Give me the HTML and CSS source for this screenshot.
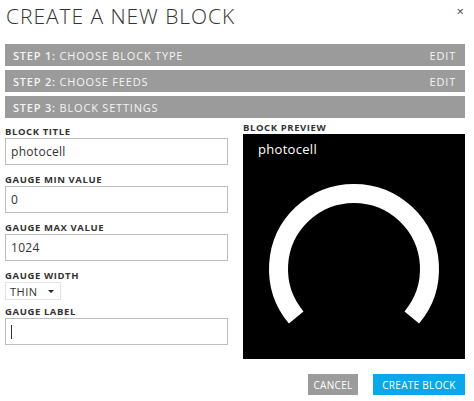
FILE: index.html
```html
<!DOCTYPE html>
<html>
<head>
<meta charset="utf-8">
<link rel="stylesheet" href="styles.css">
</head>
<body>
<div class="modal">
  <div class="header">
    <h1 class="title">CREATE A NEW BLOCK</h1>
    <span class="close">×</span>
  </div>
  <div class="step"><span><b>STEP 1:</b> CHOOSE BLOCK TYPE</span><span>EDIT</span></div>
  <div class="step"><span><b>STEP 2:</b> CHOOSE FEEDS</span><span>EDIT</span></div>
  <div class="step"><span><b>STEP 3:</b> BLOCK SETTINGS</span></div>
  <div class="content">
    <div class="form">
      <div class="field">
        <div class="label">BLOCK TITLE</div>
        <div class="input">photocell</div>
      </div>
      <div class="field">
        <div class="label">GAUGE MIN VALUE</div>
        <div class="input">0</div>
      </div>
      <div class="field">
        <div class="label">GAUGE MAX VALUE</div>
        <div class="input">1024</div>
      </div>
      <div class="field small">
        <div class="label">GAUGE WIDTH</div>
        <div class="select"><span>THIN</span><span class="caret"></span></div>
      </div>
      <div class="field">
        <div class="label">GAUGE LABEL</div>
        <div class="input"><span class="cursor"></span></div>
      </div>
    </div>
    <div class="preview">
      <div class="label plabel">BLOCK PREVIEW</div>
      <div class="pbox">
        <div class="ptitle">photocell</div>
        <svg class="gauge" width="222" height="225" viewBox="0 0 222 225">
          <path d="M 53.2 183.5 A 75.5 75.5 0 1 1 168.8 183.5" fill="none" stroke="#fff" stroke-width="19"/>
        </svg>
      </div>
    </div>
  </div>
  <div class="actions">
    <div class="btn cancel">CANCEL</div>
    <div class="btn create">CREATE BLOCK</div>
  </div>
</div>
</body>
</html>
```
FILE: styles.css
```css
html, body {
  margin: 0;
  padding: 0;
  background: #fff;
}
body {
  font-family: "Open Sans", "Liberation Sans", sans-serif;
  color: #333;
}
.modal {
  position: relative;
  width: 474px;
  height: 401px;
  padding: 0 9px 0 5px;
  box-sizing: border-box;
}
.header {
  height: 44px;
}
.title {
  margin: 0;
  padding: 3px 0 0 1px;
  font-size: 21px;
  font-weight: 300;
  line-height: 26px;
  letter-spacing: 0.95px;
  color: #333;
}
.close {
  position: absolute;
  top: 2px;
  right: 10px;
  font-size: 13px;
  color: #444;
}
.step {
  height: 22px;
  margin-bottom: 4px;
  background: #9b9b9b;
  color: #f4f4f4;
  display: flex;
  justify-content: space-between;
  align-items: center;
  padding: 0 9px 0 8px;
  font-size: 11px;
  letter-spacing: 0.8px;
}
.step b {
  font-weight: 600;
}
.content {
  display: flex;
  gap: 15px;
}
.form {
  width: 223px;
  padding-top: 3px;
}
.field {
  margin-bottom: 8px;
}
.field.small {
  margin-bottom: 5px;
}
.label {
  font-size: 9.5px;
  font-weight: 700;
  line-height: 13px;
  color: #333;
  letter-spacing: 0.6px;
}
.input {
  height: 27px;
  box-sizing: border-box;
  border: 1.5px solid #bdbdbd;
  display: flex;
  align-items: center;
  padding-left: 5px;
  font-size: 12px;
  letter-spacing: 0.3px;
  color: #333;
}
.cursor {
  display: block;
  width: 1px;
  height: 14px;
  background: #333;
}
.select {
  width: 56px;
  height: 18px;
  box-sizing: border-box;
  border: 1px solid #e4e4e4;
  display: flex;
  align-items: center;
  justify-content: space-between;
  padding: 0 6px 0 4px;
  font-size: 11px;
  letter-spacing: 0.5px;
  color: #333;
}
.caret {
  width: 0;
  height: 0;
  border-left: 3px solid transparent;
  border-right: 3px solid transparent;
  border-top: 3px solid #222;
}
.preview {
  width: 222px;
}
.plabel {
  line-height: 12px;
}
.pbox {
  position: relative;
  width: 222px;
  height: 225px;
  background: #000;
}
.ptitle {
  position: absolute;
  left: 15px;
  top: 6px;
  font-size: 13px;
  letter-spacing: 0.3px;
  color: #fff;
}
.gauge {
  display: block;
}
.actions {
  display: flex;
  justify-content: flex-end;
  gap: 15px;
  margin-top: 15px;
}
.btn {
  height: 21px;
  display: flex;
  align-items: center;
  justify-content: center;
  color: #fff;
  font-size: 10px;
  letter-spacing: 0.3px;
}
.cancel {
  width: 50px;
  background: #9b9b9b;
}
.create {
  width: 92px;
  background: #0aa8e9;
}
```
